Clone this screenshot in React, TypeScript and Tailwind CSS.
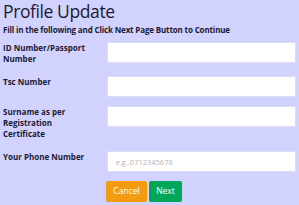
import { useState } from "react";

const FIELDS = [
  { id: "idno", label: "ID Number/Passport Number", placeholder: "" },
  { id: "tsc", label: "Tsc Number", placeholder: "" },
  { id: "surname", label: "Surname as per Registration Certificate", placeholder: "" },
  { id: "phone", label: "Your Phone Number", placeholder: "e.g..0712345678" },
];

export default function App() {
  const [values, setValues] = useState<Record<string, string>>({});

  return (
    <div
      className="w-[299px] h-[205px] bg-[#d2d2fe] text-[#1a1a33] px-[3px] overflow-hidden"
      style={{ fontFamily: '"Open Sans", sans-serif' }}
    >
      <h1 className="text-[17.5px] leading-[23px] tracking-[-0.4px]">Profile Update</h1>
      <p className="text-[8px] font-bold leading-[12px] mt-[1px] tracking-[-0.15px]">
        Fill in the following and Click Next Page Button to Continue
      </p>

      <div className="flex flex-col gap-[9px] mt-[6px]">
        {FIELDS.map((f) => (
          <div key={f.id} className="flex items-start">
            <label
              htmlFor={f.id}
              className="w-[104px] pr-[12px] pb-[3px] text-[8px] font-bold leading-[11px]"
            >
              {f.label}
            </label>
            <input
              id={f.id}
              value={values[f.id] ?? ""}
              onChange={(e) => setValues({ ...values, [f.id]: e.target.value })}
              placeholder={f.placeholder}
              className="w-[190px] h-[21px] bg-white border border-[#dcdcf2] px-[8px] text-[7.5px] outline-none placeholder:text-[#b4b4b4]"
            />
          </div>
        ))}
      </div>

      <div className="flex gap-[2px] pl-[103px] mt-[9px]">
        <button className="w-[41px] h-[21px] bg-[#f39c12] text-white text-[8.5px] rounded-[2px]">
          Cancel
        </button>
        <button className="w-[33px] h-[21px] bg-[#00a65a] text-white text-[8.5px] rounded-[2px]">
          Next
        </button>
      </div>
    </div>
  );
}
